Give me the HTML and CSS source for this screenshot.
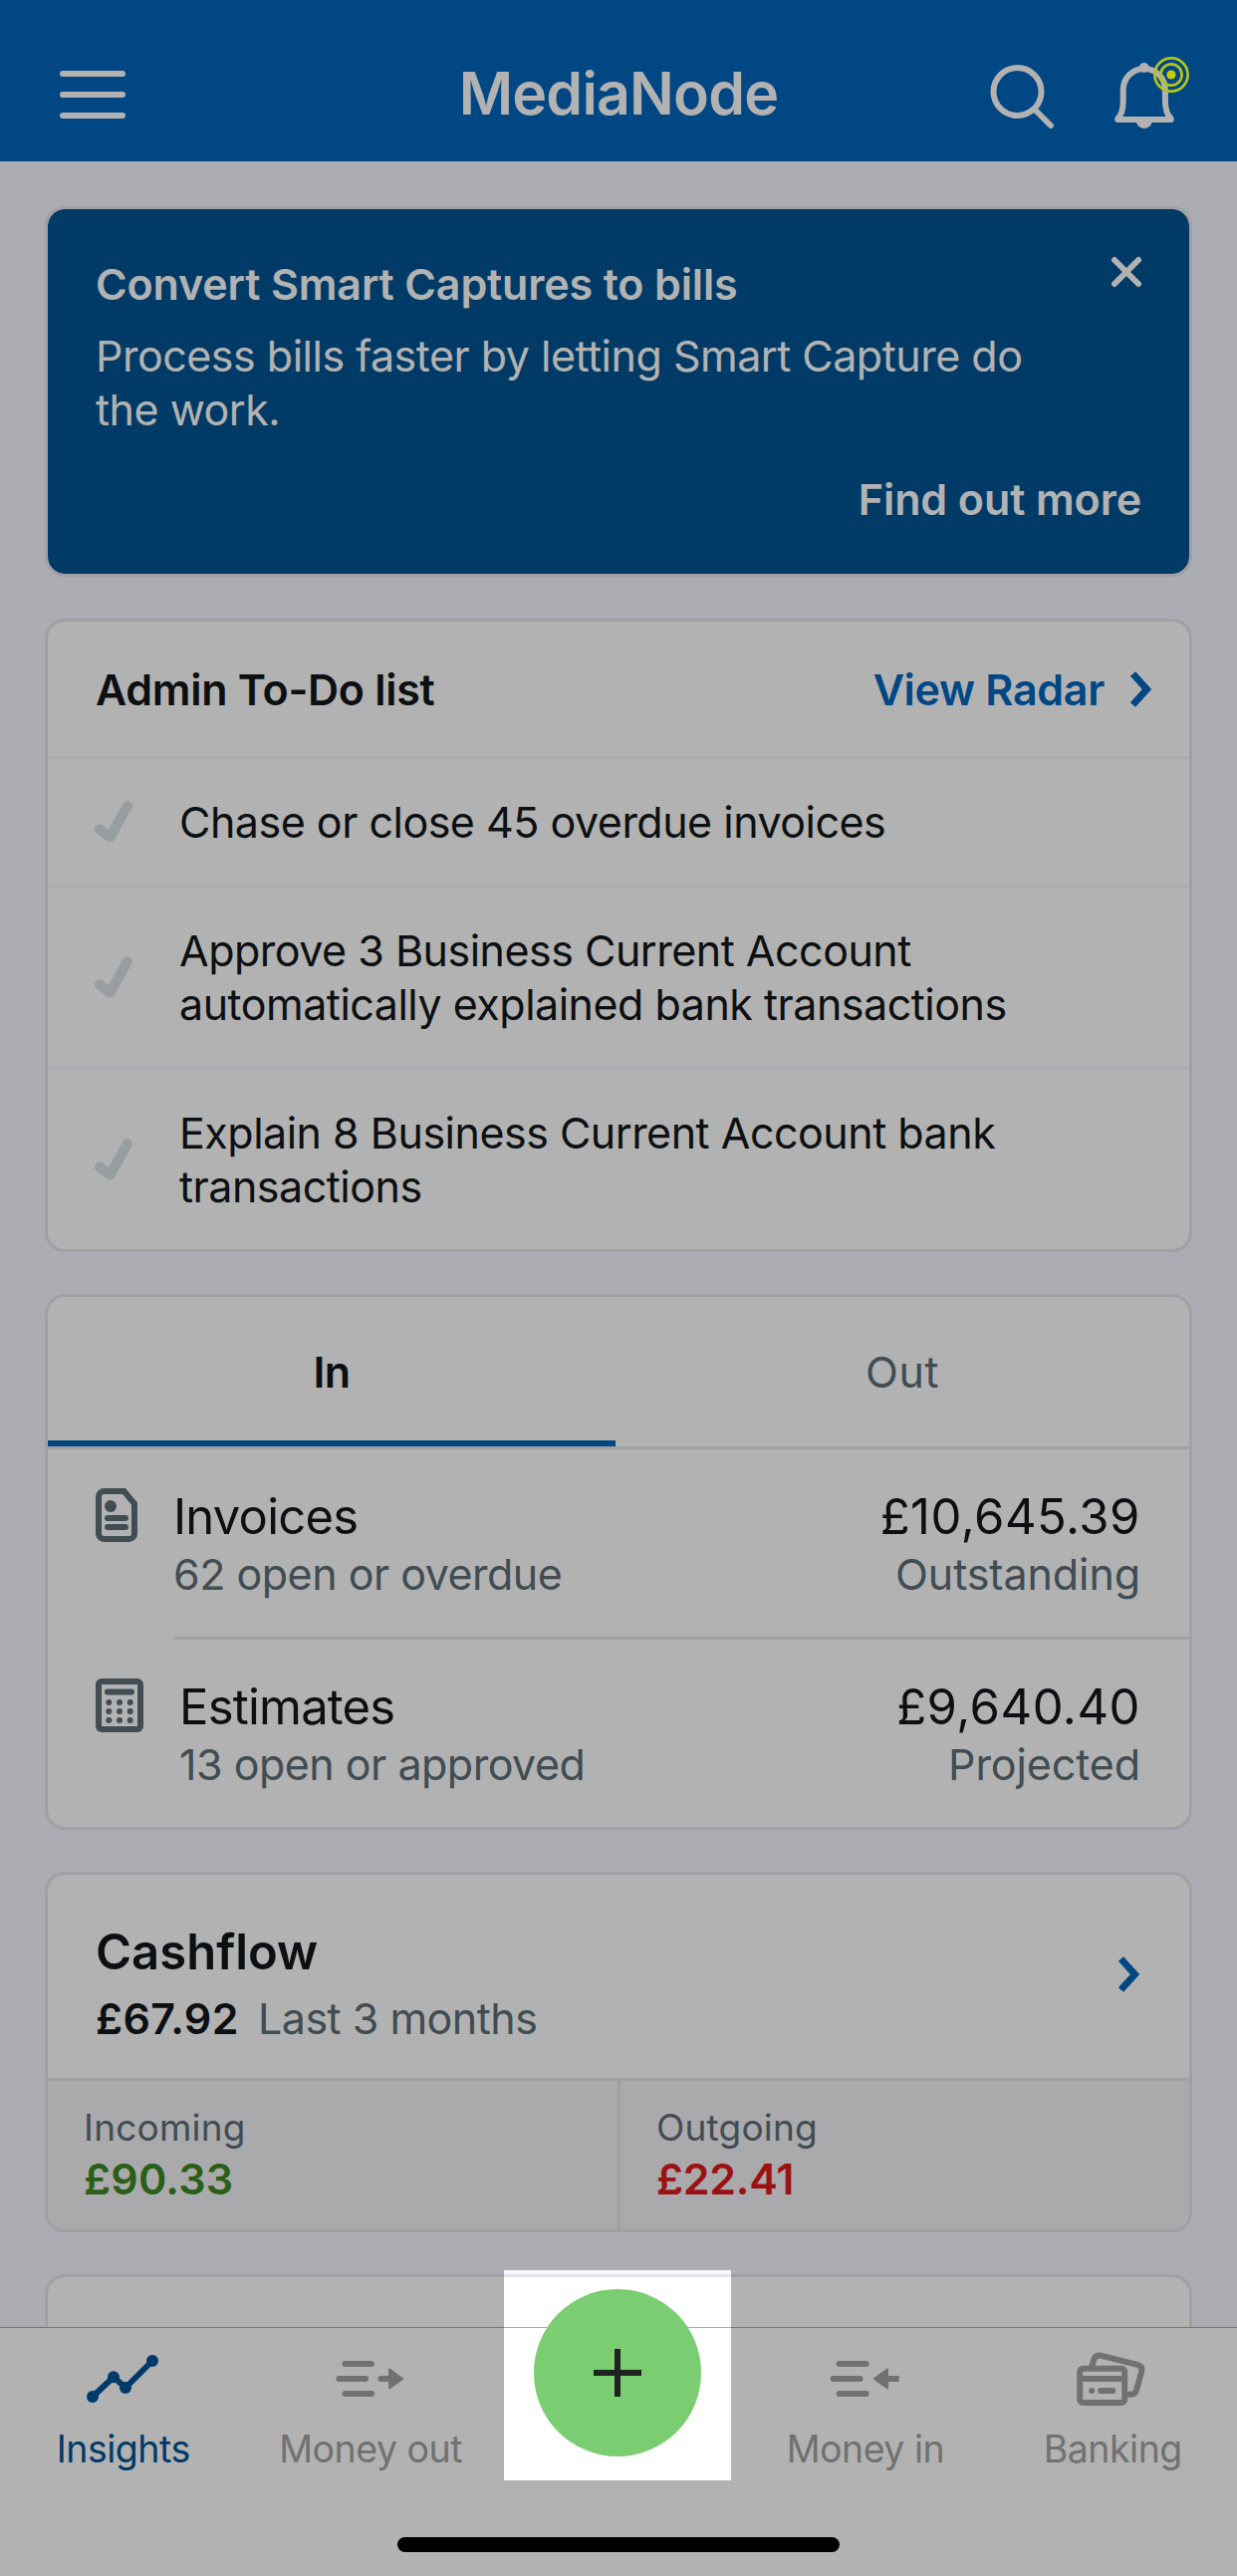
FILE: index.html
```html
<!DOCTYPE html>
<html lang="en">
<head>
    <meta charset="UTF-8">
    <meta name="viewport" content="width=device-width, initial-scale=1.0">
    <title>MediaNode</title>
    <link rel="stylesheet" href="styles.css">
</head>
<body>
<header class="header">
    <svg class="menu" width="66" height="48" viewBox="0 0 66 48">
        <path d="M3 3H63M3 24H63M3 45H63"/>
    </svg>
    <h1 class="title">MediaNode</h1>
    <div class="header-icons">
        <svg class="search" width="64" height="64" viewBox="0 0 64 64">
            <circle cx="27.5" cy="27" r="24"/>
            <path d="M45 45L61 61"/>
        </svg>
        <div class="bell">
            <svg width="78" height="74" viewBox="0 0 78 74">
                <path class="bell-body" d="M5.3 62C9.5 58 10.7 52 10.7 44V33A21.1 21.1 0 0 1 52.9 33V44C52.9 52 54.5 58 58.7 62V63H5.3Z"/>
                <circle class="bell-fill" cx="31.8" cy="11" r="5"/>
                <path class="bell-fill" d="M23.3 63H40.3A8.5 9 0 0 1 23.3 63Z"/>
            </svg>
            <svg class="pulse" width="36" height="36" viewBox="0 0 36 36">
                <circle cx="18" cy="18" r="16.6"/>
                <circle cx="18" cy="18" r="10.6"/>
                <circle class="pulse-dot" cx="18" cy="18" r="4.6"/>
            </svg>
        </div>
    </div>
</header>

<main class="content">
    <section class="card banner">
        <div class="banner-top">
            <h2 class="banner-title">Convert Smart Captures to bills</h2>
            <svg class="close" width="30" height="30" viewBox="0 0 30 30">
                <path d="M3 3L27 27M27 3L3 27"/>
            </svg>
        </div>
        <p class="banner-text">Process bills faster by letting Smart Capture do<br>the work.</p>
        <a class="banner-link">Find out more</a>
    </section>

    <section class="card">
        <div class="todo-head">
            <h2 class="todo-title">Admin To-Do list</h2>
            <a class="radar">View Radar
                <svg class="chevron" width="24" height="36" viewBox="0 0 24 36"><path d="M3.5 2.5L17.5 18L3.5 33.5"/></svg>
            </a>
        </div>
        <div class="todo">
            <svg class="check" width="38" height="42" viewBox="0 0 38 42"><path d="M5 28.5L15.5 36.5L33 5"/></svg>
            <p class="todo-text">Chase or close 45 overdue invoices</p>
        </div>
        <div class="todo">
            <svg class="check" width="38" height="42" viewBox="0 0 38 42"><path d="M5 28.5L15.5 36.5L33 5"/></svg>
            <p class="todo-text">Approve 3 Business Current Account<br>automatically explained bank transactions</p>
        </div>
        <div class="todo">
            <svg class="check" width="38" height="42" viewBox="0 0 38 42"><path d="M5 28.5L15.5 36.5L33 5"/></svg>
            <p class="todo-text">Explain 8 Business Current Account bank<br>transactions</p>
        </div>
    </section>

    <section class="card">
        <div class="tabs">
            <div class="tab active">In</div>
            <div class="tab">Out</div>
        </div>
        <div class="row">
            <svg class="row-icon" width="42" height="54" viewBox="0 0 42 54">
                <path d="M8.5 3H28.5L39 15.5V45.5A5.5 5.5 0 0 1 33.5 51H8.5A5.5 5.5 0 0 1 3 45.5V8.5A5.5 5.5 0 0 1 8.5 3Z"/>
                <path class="round" d="M12 30H30M12 39H30"/>
                <circle class="dot" cx="15" cy="18" r="6"/>
            </svg>
            <div class="row-body">
                <div>
                    <p class="row-main">Invoices</p>
                    <p class="row-sub">62 open or overdue</p>
                </div>
                <div class="row-right">
                    <p class="row-main amount">£10,645.39</p>
                    <p class="row-sub wide">Outstanding</p>
                </div>
            </div>
        </div>
        <div class="row">
            <svg class="row-icon" width="48" height="54" viewBox="0 0 48 54">
                <rect x="3" y="3" width="42" height="48" rx="3"/>
                <path class="round" d="M12 13.5H36"/>
                <path class="round" d="M13.3 24H13.3M24 24H24M34.7 24H34.7M13.3 33H13.3M24 33H24M34.7 33H34.7M13.3 42H13.3M24 42H24M34.7 42H34.7"/>
            </svg>
            <div class="row-body last">
                <div>
                    <p class="row-main">Estimates</p>
                    <p class="row-sub">13 open or approved</p>
                </div>
                <div class="row-right">
                    <p class="row-main amount">£9,640.40</p>
                    <p class="row-sub wide">Projected</p>
                </div>
            </div>
        </div>
    </section>

    <section class="card">
        <div class="cash-head">
            <div>
                <h2 class="cash-title">Cashflow</h2>
                <p class="cash-line"><b class="cash-total">£67.92</b><span class="cash-period">Last 3 months</span></p>
            </div>
            <svg class="chevron" width="24" height="36" viewBox="0 0 24 36"><path d="M3.5 2.5L17.5 18L3.5 33.5"/></svg>
        </div>
        <div class="tiles">
            <div class="tile">
                <p class="tile-name">Incoming</p>
                <p class="tile-sum plus">£90.33</p>
            </div>
            <div class="tile">
                <p class="tile-name">Outgoing</p>
                <p class="tile-sum minus">£22.41</p>
            </div>
        </div>
    </section>

    <section class="card next"></section>
</main>

<nav class="nav">
    <a class="nav-item current">
        <svg class="nav-icon" width="72" height="54" viewBox="0 0 72 54">
            <path d="M5 45L26 25.3L38 36L65 9"/>
            <g class="fill"><circle cx="5" cy="45" r="6"/><circle cx="26" cy="25.3" r="6"/><circle cx="38" cy="36" r="6"/><circle cx="65" cy="9" r="6"/></g>
        </svg>
        <span>Insights</span>
    </a>
    <a class="nav-item">
        <svg class="nav-icon" width="72" height="54" viewBox="0 0 72 54">
            <path class="round" d="M10.4 12H37M4.4 27H31M10.4 42H37M46.4 27H56"/>
            <path class="head" d="M55 17.5L68.3 27L55 36.5Z"/>
        </svg>
        <span>Money out</span>
    </a>
    <div class="nav-item">
        <button class="fab">
            <svg width="48" height="48" viewBox="0 0 48 48"><path d="M24 0V48M0 24H48"/></svg>
        </button>
    </div>
    <a class="nav-item">
        <svg class="nav-icon" width="72" height="54" viewBox="0 0 72 54">
            <path class="round" d="M9.6 12H36.6M3.6 27H30.6M9.6 42H36.6"/>
            <path d="M57 27H69.6"/>
            <path class="head" d="M58 17.5L44.7 27L58 36.5Z"/>
        </svg>
        <span>Money in</span>
    </a>
    <a class="nav-item">
        <svg class="nav-icon" width="72" height="54" viewBox="0 0 72 54">
            <rect x="3.2" y="16.7" width="45" height="34.3" rx="3"/>
            <path d="M3 27H48"/>
            <path class="round" d="M15.2 39H15.2M24.2 39H36.2"/>
            <path d="M15.2 15L17 8.5Q18.8 2.7 24 3.6L61 12.8Q66.6 14.5 65.2 20L59.8 39Q58 44 50 42.5"/>
        </svg>
        <span>Banking</span>
    </a>
</nav>

<div class="spotlight"></div>
<div class="home-bar"></div>
</body>
</html>
```
FILE: styles.css
```css
*{
    box-sizing: border-box;
}
body{
    margin: 0;
    height: 2586px;
    overflow: hidden;
    background-color: #f7f8ff;
    color: #14171a;
    font-family: Inter, "Liberation Sans", sans-serif;
    font-size: 43px;
    line-height: 54px;
    letter-spacing: -0.5px;
}
h1, h2, p{
    margin: 0;
    font-size: inherit;
    font-weight: 600;
}
p{
    font-weight: 400;
}
svg{
    display: block;
    flex: none;
    fill: none;
    overflow: visible;
}

.header{
    height: 162px;
    padding: 0 47px;
    background-color: #0066be;
    color: #fff;
    display: grid;
    grid-template-columns: 1fr auto 1fr;
    align-items: start;
}
.menu{
    margin: 71px 0 0 13px;
    stroke: #fff;
    stroke-width: 6;
    stroke-linecap: round;
}
.title{
    margin-top: 64px;
    font-size: 59px;
    line-height: 60px;
    letter-spacing: -.8px;
}
.header-icons{
    display: flex;
    justify-content: flex-end;
    gap: 59px;
}
.search{
    margin-top: 65px;
    stroke: #fff;
    stroke-width: 6;
    stroke-linecap: round;
}
.bell{
    position: relative;
    margin-top: 57px;
}
.bell-body{
    stroke: #fff;
    stroke-width: 6;
    stroke-linejoin: round;
}
.bell-fill{
    fill: #fff;
}
.pulse{
    position: absolute;
    top: 0;
    left: 41px;
    z-index: 20;
    stroke: #b4c41c;
    stroke-width: 2.7;
}
.pulse-dot{
    fill: #c6cc00;
    stroke: none;
}

.content{
    padding: 45px 45px 0;
    height: 2174px;
    overflow: hidden;
    display: flex;
    flex-direction: column;
    gap: 42px;
}
.card{
    flex: none;
    background-color: #fff;
    border: 3px solid #e5e6ec;
    border-radius: 20px;
    overflow: hidden;
}
.next{
    height: 200px;
}

.banner{
    padding: 48px 48px 48px 48px;
    background-color: #005493;
    background-clip: padding-box;
    color: #fff;
    display: flex;
    flex-direction: column;
}
.banner-top{
    display: flex;
    justify-content: space-between;
    align-items: flex-start;
}
.banner-title{
    letter-spacing: -.15px;
}
.close{
    stroke: #fff;
    stroke-width: 6;
    stroke-linecap: round;
}
.banner-text{
    margin-top: 18px;
}
.banner-link{
    margin-top: 36px;
    align-self: flex-end;
    font-weight: 600;
    letter-spacing: -.1px;
}

.todo-head{
    height: 135px;
    padding: 1px 36px 0 48px;
    display: flex;
    justify-content: space-between;
    align-items: center;
    font-weight: 600;
    letter-spacing: -.3px;
}
.radar{
    display: flex;
    align-items: center;
    gap: 25px;
    color: #0066be;
}
.chevron{
    stroke: #0066be;
    stroke-width: 7;
}
.todo{
    padding: 36px 48px 36px 47px;
    border-top: 3px solid #f4f5fc;
    display: flex;
    align-items: center;
    gap: 47px;
}
.check{
    stroke: #dae1e5;
    stroke-width: 10;
    stroke-linecap: round;
    stroke-linejoin: round;
}

.tabs{
    height: 153px;
    border-bottom: 3px solid #e5e6ea;
    display: grid;
    grid-template-columns: 570px 1fr;
}
.tab{
    padding-top: 48px;
    text-align: center;
    color: #5d6d78;
    letter-spacing: .6px;
}
.tab.active{
    color: #14171a;
    font-weight: 600;
    letter-spacing: -.5px;
    border-bottom: 6px solid #0066be;
}
.row{
    padding-left: 48px;
    display: flex;
    gap: 36px;
}
.row-icon{
    margin-top: 39px;
    stroke: #5d6d78;
    stroke-width: 6;
}
.round{
    stroke-linecap: round;
}
.dot{
    fill: #5d6d78;
    stroke: none;
}
.row-body{
    flex: 1;
    padding: 37px 49px 36px 0;
    border-bottom: 3px solid #e5e6ea;
    display: flex;
    justify-content: space-between;
}
.row-body.last{
    border-bottom: none;
}
.row-right{
    text-align: right;
}
.row-main{
    font-size: 49px;
    line-height: 61px;
    letter-spacing: -.8px;
}
.amount{
    letter-spacing: .5px;
}
.row-sub{
    color: #5d6d78;
}
.wide{
    letter-spacing: -.1px;
}

.cash-head{
    height: 204px;
    padding: 48px 48px 32px 48px;
    display: flex;
    justify-content: space-between;
}
.cash-head .chevron{
    margin-top: 34px;
}
.cash-title{
    font-size: 49px;
    line-height: 60px;
    letter-spacing: 0;
}
.cash-line{
    margin-top: 9px;
    display: flex;
    gap: 19px;
}
.cash-total{
    font-weight: 600;
    letter-spacing: .4px;
}
.cash-period{
    color: #5d6d78;
}
.tiles{
    height: 152px;
    border-top: 3px solid #e5e6ea;
    background-color: #f4f4f6;
    display: grid;
    grid-template-columns: 575px 1fr;
}
.tile{
    padding: 24px 0 0 36px;
}
.tile:first-child{
    border-right: 3px solid #e5e6ea;
}
.tile-name{
    color: #5d6d78;
    font-size: 37px;
    line-height: 46px;
    letter-spacing: .2px;
}
.tile-sum{
    margin-top: 1px;
    font-weight: 600;
    letter-spacing: .2px;
}
.plus{
    color: #3d8825;
}
.minus{
    color: #e01a1e;
    letter-spacing: -.3px;
}

.nav{
    height: 250px;
    background-color: #fff;
    border-top: 1px solid #a9aaa9;
    display: grid;
    grid-template-columns: repeat(5, 1fr);
    color: #a3a3a3;
    font-size: 37.5px;
    line-height: 48px;
}
.nav-item{
    padding-right: 1px;
    display: flex;
    flex-direction: column;
    align-items: center;
}
.nav-icon{
    margin: 24px 0 20px;
    stroke: #a3a3a3;
    stroke-width: 6;
}
.current{
    color: #005499;
}
.current .nav-icon{
    stroke: #005499;
}
.fill{
    fill: #005499;
    stroke: none;
}
.head{
    fill: #a3a3a3;
    stroke-width: 2;
    stroke-linejoin: round;
}
.fab{
    width: 168px;
    height: 168px;
    margin-top: -39px;
    margin-right: 1px;
    padding: 0;
    border: none;
    border-radius: 50%;
    background-color: #7acd70;
    display: flex;
    justify-content: center;
    align-items: center;
    z-index: 2;
}
.fab svg{
    stroke: #1f231f;
    stroke-width: 6;
}

/* dims everything except the add button */
.spotlight{
    position: absolute;
    left: 506px;
    top: 2279px;
    width: 228px;
    height: 211px;
    box-shadow: 0 0 0 3000px rgba(0,0,0,.3);
    z-index: 10;
}
.home-bar{
    position: absolute;
    left: 399px;
    bottom: 24px;
    width: 444px;
    height: 15px;
    border-radius: 8px;
    background-color: #000;
    z-index: 20;
}
```
